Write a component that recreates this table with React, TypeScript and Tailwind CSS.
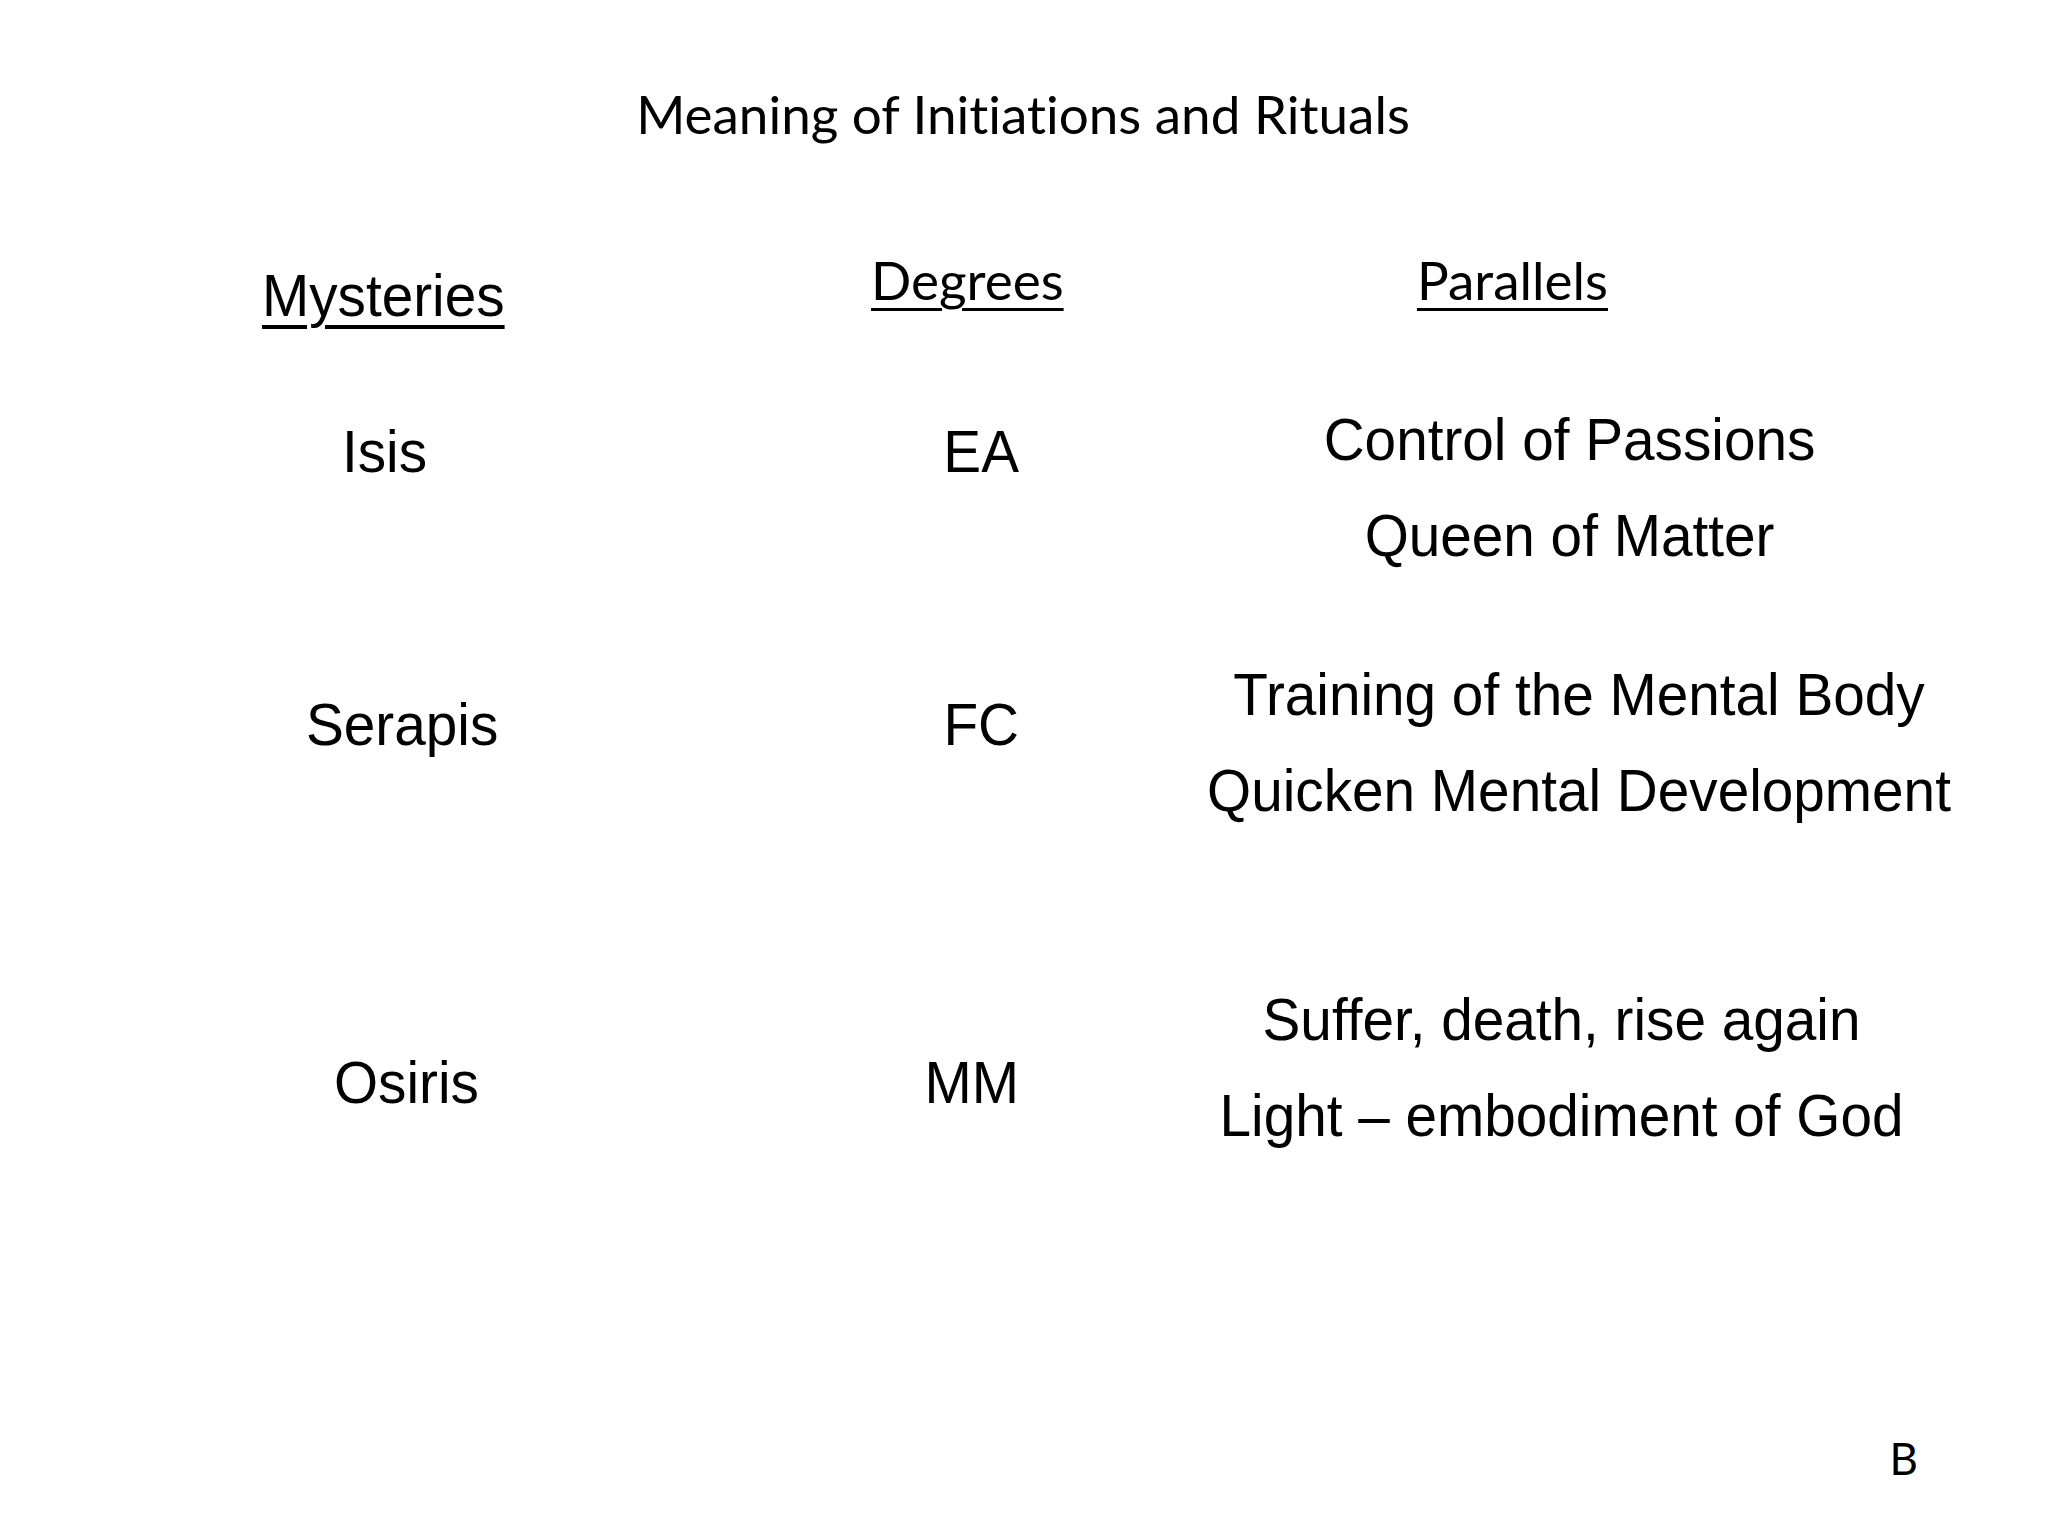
import React from "react";

const body = "font-['Liberation_Sans',Arial,sans-serif] text-[60px] leading-[96px] scale-x-[0.945]";
const calibri = "font-['Lato','Open_Sans',sans-serif] [font-variant-ligatures:none]";

const rows = [
  {
    id: 1,
    name: "Isis",
    nameClass: "pl-[342px] mt-[12px]",
    degree: "EA",
    degreeClass: "mt-[12px]",
    parallelsClass: "pl-[72px]",
    rowClass: "mt-[48px]",
    parallels: ["Control of Passions", "Queen of Matter"],
  },
  {
    id: 2,
    name: "Serapis",
    nameClass: "pl-[306px] mt-[30px]",
    degree: "FC",
    degreeClass: "mt-[30px]",
    parallelsClass: "pl-[91px]",
    rowClass: "mt-[63px]",
    parallels: ["Training of the Mental Body", "Quicken Mental Development"],
  },
  {
    id: 3,
    name: "Osiris",
    nameClass: "pl-[334px] mt-[63px]",
    degree: "MM",
    degreeClass: "mt-[63px]",
    parallelsClass: "pl-[56px]",
    rowClass: "mt-[133px]",
    parallels: ["Suffer, death, rise again", "Light – embodiment of God"],
  },
];

const App = () => {
  return (
    <div className="w-[2048px] h-[1536px] bg-white text-black overflow-hidden flex flex-col">
      <h1 className={`${calibri} text-[53px] leading-[60px] font-normal text-center mt-[84px] pr-[2px]`}>
        Meaning of Initiations and Rituals
      </h1>

      <div className="flex items-start mt-[104px]">
        <div className="w-[700px] pl-[262px]">
          <p className={`${body} origin-left underline decoration-[4px] underline-offset-[9px]`}>Mysteries</p>
        </div>
        <div className="w-[717px] pl-[171px] mt-[2px]">
          <p className={`${calibri} text-[53px] leading-[60px] underline decoration-[3px] underline-offset-[8px]`}>
            Degrees
          </p>
        </div>
        <div className="mt-[2px]">
          <p className={`${calibri} text-[53px] leading-[60px] underline decoration-[3px] underline-offset-[8px]`}>
            Parallels
          </p>
        </div>
      </div>

      {rows.map((row) => (
        <div key={row.id} className={`flex items-start ${row.rowClass}`}>
          <div className={`w-[700px] ${row.nameClass}`}>
            <p className={`${body} origin-left`}>{row.name}</p>
          </div>
          <div className={`w-[319px] text-right ${row.degreeClass}`}>
            <p className={`${body} origin-right`}>{row.degree}</p>
          </div>
          <div className={`flex-1 text-center ${row.parallelsClass}`}>
            {row.parallels.map((line) => (
              <p key={line} className={`${body} whitespace-nowrap`}>
                {line}
              </p>
            ))}
          </div>
        </div>
      ))}

      <div className="flex justify-end pr-[130px] mt-[269px]">
        <p className={`${calibri} text-[44px] leading-[50px]`}>B</p>
      </div>
    </div>
  );
};

export default App;
